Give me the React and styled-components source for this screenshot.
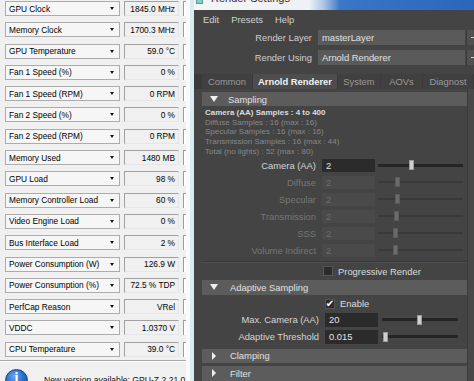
import React from "react";
import styled, { createGlobalStyle } from "styled-components";

const Global = createGlobalStyle`
  html, body { margin: 0; padding: 0; background: #f0f0f0; }
  body { width: 474px; height: 381px; overflow: hidden; }
  * { box-sizing: border-box; }
`;

const Screen = styled.div`
  display: flex;
  width: 474px;
  height: 381px;
  overflow: hidden;
  font-family: "Liberation Sans", Arial, sans-serif;
`;

/* ---------------- GPU-Z panel ---------------- */
const GpuPanel = styled.div`
  width: 186px;
  flex: none;
  background: #f0f0f0;
  display: flex;
  flex-direction: column;
  padding: 1px 0 0 5px;
  overflow: hidden;
`;

const SensorList = styled.div`
  display: grid;
  grid-auto-rows: 15px;
  row-gap: 6.3px;
`;

const SensorRow = styled.div`
  display: grid;
  grid-template-columns: 115px 55px 14px;
  column-gap: 4px;
  font-size: 8.3px;
  color: #000;
`;

const LabelBox = styled.div`
  display: flex;
  align-items: center;
  justify-content: space-between;
  padding: 0 5px 0 3px;
  background: #f6f6f6;
  border: 1px solid #acacac;
  white-space: nowrap;
`;

const Caret = styled.span`
  width: 0;
  height: 0;
  border-left: 2.5px solid transparent;
  border-right: 2.5px solid transparent;
  border-top: 3px solid #111;
`;

const ValueBox = styled.div`
  display: flex;
  align-items: center;
  justify-content: flex-end;
  padding-right: 3px;
  background: #f0f0f0;
  border-top: 1px solid #a0a0a0;
  border-left: 1px solid #a0a0a0;
  border-right: 1px solid #e6e6e6;
  border-bottom: 1px solid #e6e6e6;
  white-space: nowrap;
`;

const GraphBox = styled.div`
  background: #fff;
  border-left: 1px solid #9c9c9c;
  border-top: 1px solid #9c9c9c;
`;

const Divider = styled.div`
  margin: 3px 0 0 -5px;
  border-top: 1px solid #a8a8a8;
  border-bottom: 1px solid #fff;
`;

const Notice = styled.div`
  display: flex;
  align-items: flex-start;
  gap: 16px;
  padding-top: 7px;
`;

const InfoIcon = styled.div`
  width: 23px;
  height: 23px;
  flex: none;
  border-radius: 50%;
  background: radial-gradient(circle at 40% 30%, #6aa6ee 0%, #2a6fd0 45%, #0d4aa0 100%);
  border: 1px solid #0b3f88;
  display: flex;
  justify-content: center;
  padding-top: 1px;
  color: #fff;
  font-family: "Liberation Serif", serif;
  font-weight: bold;
  font-size: 14px;
  line-height: 14px;
`;

const NoticeText = styled.div`
  padding-top: 6px;
  font-size: 8.6px;
  color: #111;
  white-space: nowrap;
`;

const Seam = styled.div`
  width: 8px;
  flex: none;
  background: linear-gradient(to right, #fafafa 0 4px, #d9ecf2 4px 8px);
`;

/* ---------------- Maya window ---------------- */
const MayaWindow = styled.div`
  flex: 1;
  display: flex;
  flex-direction: column;
  background: #444;
  min-width: 0;
  font-size: 9.4px;
`;

const TitleBar = styled.div`
  height: 10px;
  flex: none;
  display: flex;
  align-items: flex-start;
  gap: 8px;
  padding-left: 2px;
  overflow: hidden;
  background: linear-gradient(to right, #f3f5f7 0px, #eef1f5 115px, #a9c4e6 130px, #3b77c6 146px, #2a66bb 100%);
`;

const TitleIcon = styled.div`
  width: 7px;
  height: 4px;
  background: #8cc9c4;
  border: 1px solid #5a9c98;
  border-top: none;
  flex: none;
`;

const TitleText = styled.div`
  margin-top: -8px;
  font-size: 11px;
  line-height: 12px;
  color: #3a2a2a;
  white-space: nowrap;
`;

const MenuBar = styled.div`
  height: 18px;
  display: flex;
  align-items: center;
  gap: 12px;
  padding-left: 9px;
  color: #d2d2d2;
`;

const LayerRow = styled.div`
  display: flex;
  height: 15px;
  margin-top: ${(p) => p.$top}px;
`;

const LayerLabel = styled.div`
  width: 118px;
  margin-right: 6px;
  text-align: right;
  line-height: 15px;
  color: #cfcfcf;
`;

const LayerField = styled.div`
  flex: 1;
  background: #5a5a5a;
  color: #e2e2e2;
  line-height: 15px;
  padding-left: 4px;
`;

const DropButton = styled.div`
  width: 8px;
  margin-left: 1px;
  background: #505050;
  border-left: 1px solid #3a3a3a;
  display: flex;
  align-items: center;
  justify-content: flex-end;
  &::after {
    content: "";
    width: 3px;
    height: 1px;
    background: #cfcfcf;
  }
`;

const TabBar = styled.div`
  display: flex;
  gap: 1px;
  height: 15px;
  margin-top: 9px;
  padding-left: 8px;
  background: #3a3a3a;
`;

const Tab = styled.div`
  flex: none;
  width: ${(p) => p.$w}px;
  display: flex;
  align-items: center;
  justify-content: center;
  background: ${(p) => (p.$active ? "#4d4d4d" : "#404040")};
  color: ${(p) => (p.$active ? "#f2f2f2" : "#9a9a9a")};
  font-weight: ${(p) => (p.$active ? "bold" : "normal")};
  white-space: nowrap;
  overflow: hidden;
`;

const Content = styled.div`
  flex: 1;
  display: flex;
  min-height: 0;
`;

const ContentInner = styled.div`
  flex: 1;
  display: flex;
  flex-direction: column;
  padding: 3px 0 0 8px;
  min-width: 0;
`;

const ScrollGutter = styled.div`
  width: 7px;
  flex: none;
  background: #484848;
  border-left: 1px solid #3c3c3c;
`;

const FrameHeader = styled.div`
  height: ${(p) => p.$h || 14}px;
  margin-top: ${(p) => p.$top || 0}px;
  flex: none;
  display: flex;
  align-items: center;
  background: #5c5c5c;
  color: #e0e0e0;
  padding-left: 8px;
`;

const TriBox = styled.span`
  width: 8px;
  margin-right: ${(p) => p.$gap}px;
  display: flex;
  justify-content: center;
  &::before {
    content: "";
    width: 0;
    height: 0;
    ${(p) =>
      p.$open
        ? `border-left: 4px solid transparent; border-right: 4px solid transparent; border-top: 6px solid #f0f0f0;`
        : `border-top: 4px solid transparent; border-bottom: 4px solid transparent; border-left: 4px solid #f0f0f0;`}
  }
`;

const InfoBlock = styled.div`
  margin-top: 2px;
  padding-left: 3px;
  font-size: 8px;
  line-height: 9.7px;
  color: #878787;
  white-space: nowrap;
`;

const InfoStrong = styled.div`
  color: #dcdcdc;
  font-weight: bold;
`;

const AttrGroup = styled.div`
  display: flex;
  flex-direction: column;
  gap: ${(p) => p.$gap}px;
  margin-top: ${(p) => p.$top}px;
`;

const AttrRow = styled.div`
  display: flex;
  align-items: center;
  height: ${(p) => p.$h}px;
`;

const AttrLabel = styled.div`
  width: ${(p) => p.$w}px;
  margin-right: 6px;
  text-align: right;
  color: ${(p) => (p.$off ? "#767676" : "#d6d6d6")};
  white-space: nowrap;
`;

const AttrField = styled.div`
  width: 53px;
  height: 100%;
  display: flex;
  align-items: center;
  padding-left: 4px;
  background: ${(p) => (p.$off ? "#4a4a4a" : "#2b2b2b")};
  color: ${(p) => (p.$off ? "#6c6c6c" : "#e4e4e4")};
`;

const Slider = styled.div`
  position: relative;
  width: ${(p) => p.$w}px;
  margin-left: ${(p) => p.$gap}px;
  height: 100%;
  display: flex;
  align-items: center;
`;

const Track = styled.div`
  width: 100%;
  height: ${(p) => (p.$off ? 2 : 3)}px;
  background: ${(p) => (p.$off ? "#393939" : "#252525")};
`;

const Handle = styled.div`
  position: absolute;
  left: ${(p) => p.$pos}px;
  top: 50%;
  width: 5px;
  height: 10px;
  transform: translateY(-50%);
  background: ${(p) => (p.$off ? "#6a6a6a" : "#cfcfcf")};
  border: 1px solid ${(p) => (p.$off ? "#5a5a5a" : "#9a9a9a")};
`;

const Separator = styled.div`
  margin-top: 4px;
  height: 2px;
  border-top: 1px solid #3a3a3a;
  border-bottom: 1px solid #4e4e4e;
`;

const CheckRow = styled.div`
  display: flex;
  align-items: center;
  gap: 5px;
  height: ${(p) => p.$h}px;
  margin-top: ${(p) => p.$top}px;
  padding-left: ${(p) => p.$indent}px;
  color: #dedede;
`;

const CheckBox = styled.div`
  width: 10px;
  height: 10px;
  background: #2b2b2b;
  border: 1px solid #555;
  display: flex;
  align-items: center;
  justify-content: center;
  color: #fff;
  font-size: 10px;
  line-height: 10px;
  font-family: "DejaVu Sans", sans-serif;
`;

const sensors = [
  ["GPU Clock", "1845.0 MHz"],
  ["Memory Clock", "1700.3 MHz"],
  ["GPU Temperature", "59.0 °C"],
  ["Fan 1 Speed (%)", "0 %"],
  ["Fan 1 Speed (RPM)", "0 RPM"],
  ["Fan 2 Speed (%)", "0 %"],
  ["Fan 2 Speed (RPM)", "0 RPM"],
  ["Memory Used", "1480 MB"],
  ["GPU Load", "98 %"],
  ["Memory Controller Load", "60 %"],
  ["Video Engine Load", "0 %"],
  ["Bus Interface Load", "2 %"],
  ["Power Consumption (W)", "126.9 W"],
  ["Power Consumption (%)", "72.5 % TDP"],
  ["PerfCap Reason", "VRel"],
  ["VDDC", "1.0370 V"],
  ["CPU Temperature", "39.0 °C"],
];

const samplingAttrs = [
  { label: "Camera (AA)", value: "2", pos: 31, off: false },
  { label: "Diffuse", value: "2", pos: 17, off: true },
  { label: "Specular", value: "2", pos: 17, off: true },
  { label: "Transmission", value: "2", pos: 16, off: true },
  { label: "SSS", value: "2", pos: 15, off: true },
  { label: "Volume Indirect", value: "2", pos: 15, off: true },
];

const adaptiveAttrs = [
  { label: "Max. Camera (AA)", value: "20", pos: 35 },
  { label: "Adaptive Threshold", value: "0.015", pos: 1 },
];

const tabs = [
  { name: "Common", w: 50 },
  { name: "Arnold Renderer", w: 84, active: true },
  { name: "System", w: 42 },
  { name: "AOVs", w: 41 },
  { name: "Diagnost", w: 50 },
];

export default function App() {
  return (
    <>
      <Global />
      <Screen>
        <GpuPanel>
          <SensorList>
            {sensors.map(([label, value]) => (
              <SensorRow key={label}>
                <LabelBox>
                  <span>{label}</span>
                  <Caret />
                </LabelBox>
                <ValueBox>{value}</ValueBox>
                <GraphBox />
              </SensorRow>
            ))}
          </SensorList>
          <Divider />
          <Notice>
            <InfoIcon>i</InfoIcon>
            <NoticeText>New version available: GPU-Z 2.21.0</NoticeText>
          </Notice>
        </GpuPanel>
        <Seam />
        <MayaWindow>
          <TitleBar>
            <TitleIcon />
            <TitleText>Render Settings</TitleText>
          </TitleBar>
          <MenuBar>
            <span>Edit</span>
            <span>Presets</span>
            <span>Help</span>
          </MenuBar>
          <LayerRow $top={2}>
            <LayerLabel>Render Layer</LayerLabel>
            <LayerField>masterLayer</LayerField>
            <DropButton />
          </LayerRow>
          <LayerRow $top={5}>
            <LayerLabel>Render Using</LayerLabel>
            <LayerField>Arnold Renderer</LayerField>
            <DropButton />
          </LayerRow>
          <TabBar>
            {tabs.map((t) => (
              <Tab key={t.name} $w={t.w} $active={t.active}>
                {t.name}
              </Tab>
            ))}
          </TabBar>
          <Content>
            <ContentInner>
              <FrameHeader $h={14}>
                <TriBox $open $gap={10} />
                Sampling
              </FrameHeader>
              <InfoBlock>
                <InfoStrong>Camera (AA) Samples : 4 to 400</InfoStrong>
                <div>Diffuse Samples : 16 (max : 16)</div>
                <div>Specular Samples : 16 (max : 16)</div>
                <div>Transmission Samples : 16 (max : 44)</div>
                <div>Total (no lights) : 52 (max : 80)</div>
              </InfoBlock>
              <AttrGroup $gap={4} $top={2}>
                {samplingAttrs.map((a) => (
                  <AttrRow key={a.label} $h={13}>
                    <AttrLabel $w={114} $off={a.off}>{a.label}</AttrLabel>
                    <AttrField $off={a.off}>{a.value}</AttrField>
                    <Slider $w={85} $gap={3}>
                      <Track $off={a.off} />
                      <Handle $pos={a.pos} $off={a.off} />
                    </Slider>
                  </AttrRow>
                ))}
              </AttrGroup>
              <Separator />
              <CheckRow $h={11} $top={3} $indent={121}>
                <CheckBox />
                Progressive Render
              </CheckRow>
              <FrameHeader $h={15} $top={3}>
                <TriBox $open $gap={12} />
                Adaptive Sampling
              </FrameHeader>
              <CheckRow $h={10} $top={4} $indent={123}>
                <CheckBox>✔</CheckBox>
                Enable
              </CheckRow>
              <AttrGroup $gap={3} $top={4}>
                {adaptiveAttrs.map((a) => (
                  <AttrRow key={a.label} $h={14}>
                    <AttrLabel $w={117}>{a.label}</AttrLabel>
                    <AttrField>{a.value}</AttrField>
                    <Slider $w={76} $gap={4}>
                      <Track />
                      <Handle $pos={a.pos} />
                    </Slider>
                  </AttrRow>
                ))}
              </AttrGroup>
              <FrameHeader $h={14} $top={5}>
                <TriBox $gap={12} />
                Clamping
              </FrameHeader>
              <FrameHeader $h={15} $top={3}>
                <TriBox $gap={12} />
                Filter
              </FrameHeader>
            </ContentInner>
            <ScrollGutter />
          </Content>
        </MayaWindow>
      </Screen>
    </>
  );
}
